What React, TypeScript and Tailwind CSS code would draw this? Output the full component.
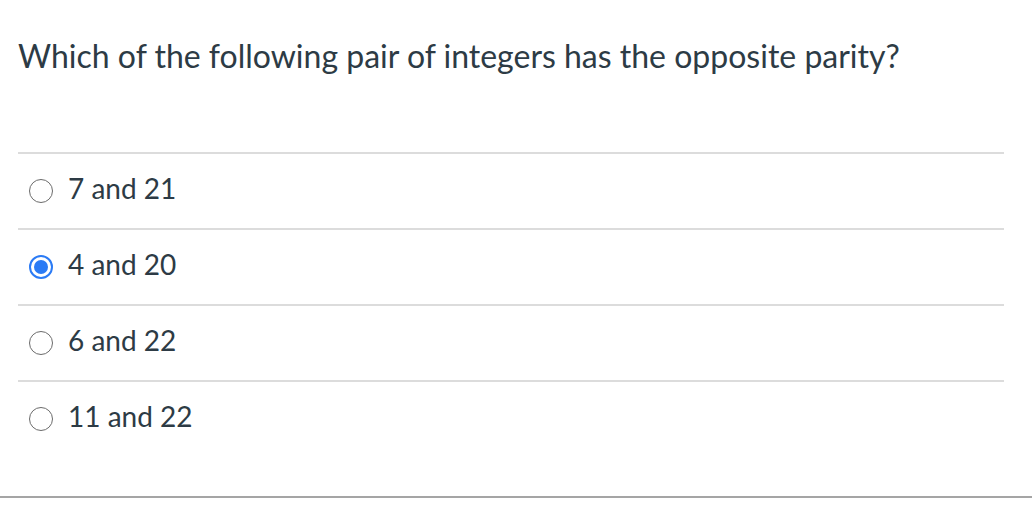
import React from 'react';

const answers = [
  { label: '7 and 21', selected: false },
  { label: '4 and 20', selected: true },
  { label: '6 and 22', selected: false },
  { label: '11 and 22', selected: false },
];

function Radio({ selected }: { selected: boolean }) {
  if (selected) {
    return (
      <span className="flex h-[24px] w-[24px] shrink-0 items-center justify-center rounded-full border-[2px] border-[#2b7bf5] bg-white">
        <span className="h-[14px] w-[14px] rounded-full bg-[#2b7bf5]" />
      </span>
    );
  }
  return <span className="h-[24px] w-[24px] shrink-0 rounded-full border-[1.5px] border-[#6b6b6b] bg-white" />;
}

export default function App() {
  return (
    <div className="h-[506px] w-[1032px] bg-white font-['Lato','Noto_Sans',sans-serif] text-[#2d3b45]">
      <div className="px-[18px] pt-[36px]">
        <h1 className="text-[32px] leading-[40px]">Which of the following pair of integers has the opposite parity?</h1>
      </div>
      <div className="mx-[18px] mt-[76px] w-[986px]">
        {answers.map((a) => (
          <div key={a.label} className="flex h-[76px] items-center gap-[15px] border-t-2 border-[#dcdcdc] pl-[11px]">
            <Radio selected={a.selected} />
            <span className="pb-[6px] text-[28px] leading-none">{a.label}</span>
          </div>
        ))}
      </div>
      <div className="mt-[40px] h-[2px] w-full bg-[#a5a5a5]" />
    </div>
  );
}
